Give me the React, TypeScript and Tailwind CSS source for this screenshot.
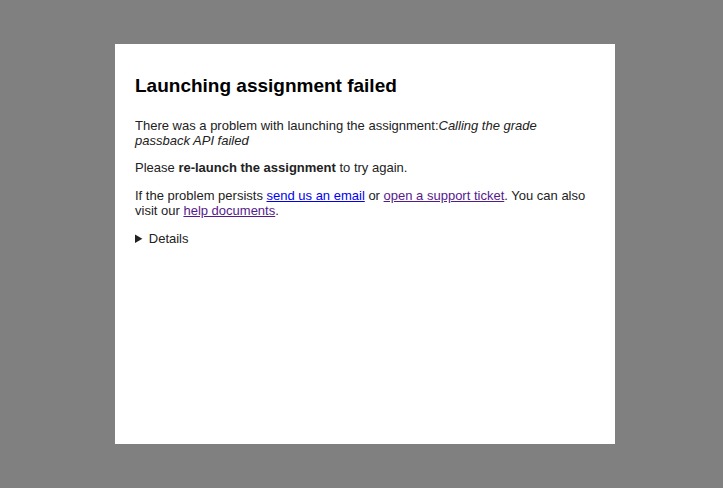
import React from "react";

export default function App() {
  return (
    <div className="w-[723px] h-[488px] bg-[#808080] pt-[44px] pl-[115px]" style={{ fontFamily: '"Liberation Sans", Arial, sans-serif' }}>
      <div className="w-[500px] h-[400px] bg-white p-5 text-[13px] leading-[normal] text-[#222]">
        <h1 className="mt-[10px] mb-[21px] text-[19px] leading-[23px] font-bold text-black">Launching assignment failed</h1>
        <p className="mb-[12px]">
          There was a problem with launching the assignment:<i>Calling the grade passback API failed</i>
        </p>
        <p className="mb-[13px]">
          Please <b>re-launch the assignment</b> to try again.
        </p>
        <p className="mb-[13px]">
          If the problem persists <a href="#" className="text-[#0000ee] underline">send us an email</a> or{" "}
          <a href="#" className="text-[#551a8b] underline">open a support ticket</a>. You can also visit our{" "}
          <a href="#" className="text-[#551a8b] underline">help documents</a>.
        </p>
        <details>
          <summary className="cursor-pointer">Details</summary>
        </details>
      </div>
    </div>
  );
}
